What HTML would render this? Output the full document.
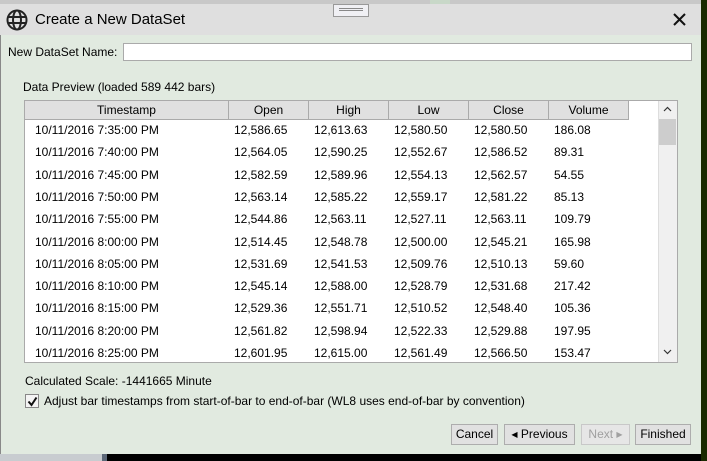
<!DOCTYPE html>
<html><head><style>
*{margin:0;padding:0;box-sizing:border-box}
body{width:707px;height:461px;position:relative;overflow:hidden;background:#000;font-family:"Liberation Sans",sans-serif;font-size:12px;color:#000}
.abs{position:absolute}
.dlg{left:0;top:4px;width:701px;height:450px;background:#e1eae0;border-left:1px solid #888;}
.title{left:0;top:4px;width:701px;height:31px;background:#dfdfdf}
.t{position:absolute;white-space:nowrap}
.hdr{position:absolute;top:101px;height:19px;background:#e0e0e0;border-right:1px solid #aaa;border-bottom:1px solid #aaa;text-align:center;line-height:18px}
.btn{position:absolute;top:424px;height:21px;border:1px solid #adadad;background:#e1e1e1;text-align:center;line-height:19px}
</style></head><body>
<div class="abs" style="left:0;top:0;width:701px;height:4px;background:#c8c8c8"></div>
<div class="abs" style="left:701px;top:0;width:6px;height:461px;background:#1a2a00"></div>
<div class="abs" style="left:430px;top:0;width:20px;height:4px;background:#c8d8c8"></div>
<div class="abs" style="left:0;top:454px;width:102px;height:7px;background:#c8ccd0"></div>
<div class="abs" style="left:102px;top:454px;width:5px;height:7px;background:#5c6878"></div>
<div class="abs dlg"></div>
<div class="abs title"></div>
<div class="abs" style="left:333px;top:4px;width:36px;height:13px;border:1px solid #999;background:#f0f0f4"><div style="margin:3px 5px;border-top:1px solid #888;border-bottom:1px solid #888;height:3px"></div></div>
<svg class="abs" style="left:6px;top:9px" width="22" height="22" viewBox="0 0 22 22" fill="none" stroke="#222" stroke-width="2"><circle cx="11" cy="11" r="9.5"/><ellipse cx="11" cy="11" rx="4" ry="9.5"/><line x1="1.5" y1="8" x2="20.5" y2="8"/><line x1="1.5" y1="14" x2="20.5" y2="14"/></svg>
<div class="t" style="left:35px;top:11px;font-size:15px">Create a New DataSet</div>
<svg class="abs" style="left:673px;top:13px" width="13" height="13" stroke="#111" stroke-width="2"><line x1="1" y1="1" x2="12" y2="12"/><line x1="12" y1="1" x2="1" y2="12"/></svg>
<div class="t" style="left:8px;top:45px">New DataSet Name:</div>
<div class="abs" style="left:123px;top:43px;width:569px;height:18px;background:#fff;border:1px solid #aaa"></div>
<div class="t" style="left:23px;top:80px">Data Preview (loaded 589 442 bars)</div>
<div class="abs" style="left:24px;top:100px;width:654px;height:263px;background:#fff;border:1px solid #aaa"></div>
<div class="hdr" style="left:25px;width:204px">Timestamp</div>
<div class="hdr" style="left:229px;width:80px">Open</div>
<div class="hdr" style="left:309px;width:80px">High</div>
<div class="hdr" style="left:389px;width:80px">Low</div>
<div class="hdr" style="left:469px;width:80px">Close</div>
<div class="hdr" style="left:549px;width:80px">Volume</div>
<div class="abs" style="left:658px;top:101px;width:19px;height:261px;background:#f0f0f0;border-left:1px solid #ddd"></div>
<div class="abs" style="left:659px;top:119px;width:17px;height:26px;background:#cdcdcd"></div>
<svg class="abs" style="left:663px;top:106px" width="9" height="6" fill="none" stroke="#333" stroke-width="1.2"><polyline points="1,5 4.5,1.5 8,5"/></svg>
<svg class="abs" style="left:663px;top:349px" width="9" height="6" fill="none" stroke="#333" stroke-width="1.2"><polyline points="1,1 4.5,4.5 8,1"/></svg>
<div id="rows"></div>
<div class="t" style="left:25px;top:374px">Calculated Scale: -1441665 Minute</div>
<div class="abs" style="left:25px;top:394px;width:14px;height:14px;border:1px solid #888;background:#f4f4f4"></div>
<svg class="abs" style="left:27px;top:396px" width="11" height="11" fill="none" stroke="#111" stroke-width="2"><polyline points="1.5,5.5 4.5,9 9.5,1.5"/></svg>
<div class="t" style="left:44px;top:394px">Adjust bar timestamps from start-of-bar to end-of-bar (WL8 uses end-of-bar by convention)</div>
<div class="btn" style="left:451px;width:47px">Cancel</div>
<div class="btn" style="left:504px;width:71px"><span style="font-size:8px;vertical-align:1px">&#9664;&#xFE0E;</span> Previous</div>
<div class="btn" style="left:581px;width:49px;color:#a0a0a0;border-color:#c8c8c8;background:#e6e6e6">Next <span style="font-size:8px;vertical-align:1px">&#9654;&#xFE0E;</span></div>
<div class="btn" style="left:635px;width:56px">Finished</div>
<script>
var d=[["7:35","12,586.65","12,613.63","12,580.50","12,580.50","186.08"],["7:40","12,564.05","12,590.25","12,552.67","12,586.52","89.31"],["7:45","12,582.59","12,589.96","12,554.13","12,562.57","54.55"],["7:50","12,563.14","12,585.22","12,559.17","12,581.22","85.13"],["7:55","12,544.86","12,563.11","12,527.11","12,563.11","109.79"],["8:00","12,514.45","12,548.78","12,500.00","12,545.21","165.98"],["8:05","12,531.69","12,541.53","12,509.76","12,510.13","59.60"],["8:10","12,545.14","12,588.00","12,528.79","12,531.68","217.42"],["8:15","12,529.36","12,551.71","12,510.52","12,548.40","105.36"],["8:20","12,561.82","12,598.94","12,522.33","12,529.88","197.95"],["8:25","12,601.95","12,615.00","12,561.49","12,566.50","153.47"]];
var xs=[35,234,314,394,474,554],h="";
d.forEach(function(r,i){var y=123+i*22.3;r[0]="10/11/2016 "+r[0]+":00 PM";r.forEach(function(v,j){h+='<div class="t" style="left:'+xs[j]+'px;top:'+y+'px">'+v+'</div>';});});
document.getElementById("rows").innerHTML=h;
</script>
</body></html>
